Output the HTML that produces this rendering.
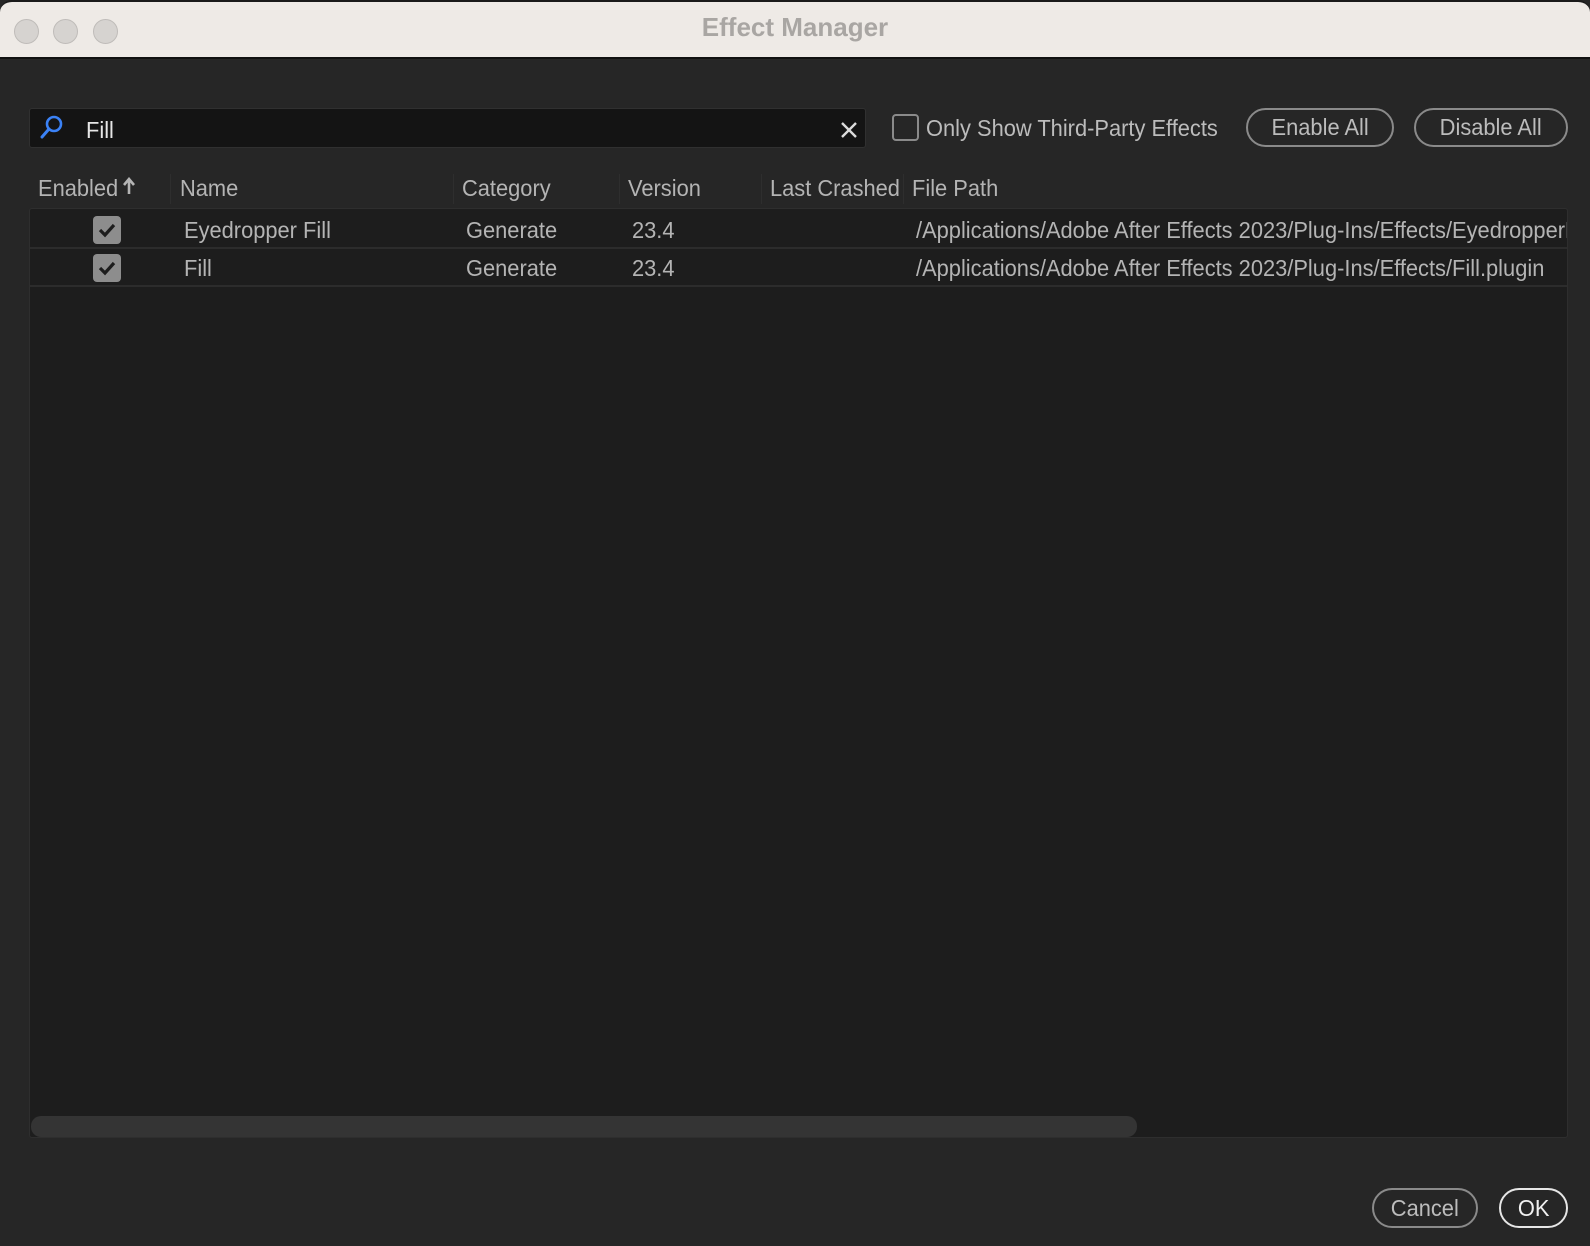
<!DOCTYPE html>
<html><head><meta charset="utf-8"><style>
*{margin:0;padding:0;box-sizing:border-box}
body{width:1590px;height:1246px;background:#262626;font-family:"Liberation Sans",sans-serif;position:relative;overflow:hidden;color:#b4b4b4}
.a{position:absolute}
.t{position:absolute;font-size:23px;white-space:nowrap;transform:scaleX(0.95);transform-origin:left center;line-height:26px}
.tb{left:0;top:0;width:1590px;height:59px;background:#eeeae6;border-top:2px solid #1a1a1a;border-bottom:2px solid #111;border-radius:12px 12px 0 0}
.dot{position:absolute;top:17px;width:25px;height:25px;border-radius:50%;background:#d6d3d0;border:1px solid #bfbcb9}
.btn{position:absolute;border:2px solid #8a8a8a;border-radius:20px;height:39px;color:#bcbcbc;font-size:23px;display:flex;align-items:center;justify-content:center}
.btn span{display:inline-block;transform:scaleX(0.95)}
.cb{position:absolute;left:93px;width:28px;height:28px;background:#8d8d8d;border-radius:4px}
.hs{position:absolute;top:174px;width:1px;height:30px;background:#2e2e2e}
</style></head><body>
<div class="a tb">
<div class="dot" style="left:14px"></div><div class="dot" style="left:53px"></div><div class="dot" style="left:93px"></div>
<div class="a" style="left:0;width:1590px;top:10px;text-align:center;font-size:26px;font-weight:bold;color:#a9a6a3">Effect Manager</div>
</div>
<div class="a" style="left:29px;top:108px;width:837px;height:40px;background:#141414;border:1px solid #303030;border-radius:3px"></div>
<svg class="a" style="left:38px;top:113px" width="28" height="28" viewBox="0 0 28 28"><circle cx="16" cy="11" r="7" fill="none" stroke="#3b82f6" stroke-width="2.6"/><path d="M11 16 L4 24" stroke="#3b82f6" stroke-width="3" stroke-linecap="round"/></svg>
<div class="t" style="left:86px;top:117px;color:#e6e6e6">Fill</div>
<svg class="a" style="left:839px;top:120px" width="20" height="20" viewBox="0 0 20 20"><path d="M3 3 L17 17 M17 3 L3 17" stroke="#dcdcdc" stroke-width="2.4"/></svg>
<div class="a" style="left:892px;top:114px;width:27px;height:27px;border:2px solid #8a8a8a;border-radius:4px"></div>
<div class="t" style="left:926px;top:115px;color:#bcbcbc">Only Show Third-Party Effects</div>
<div class="btn" style="left:1246px;top:108px;width:148px"><span>Enable All</span></div>
<div class="btn" style="left:1414px;top:108px;width:154px"><span>Disable All</span></div>
<div class="t" style="left:38px;top:175px">Enabled</div>
<svg class="a" style="left:122px;top:177px" width="14" height="18" viewBox="0 0 14 18"><path d="M7 17 V3 M2 8 L7 2 L12 8" stroke="#b4b4b4" stroke-width="2.6" fill="none"/></svg>
<div class="hs" style="left:170px"></div>
<div class="t" style="left:180px;top:175px">Name</div>
<div class="hs" style="left:453px"></div>
<div class="t" style="left:462px;top:175px">Category</div>
<div class="hs" style="left:619px"></div>
<div class="t" style="left:628px;top:175px">Version</div>
<div class="hs" style="left:761px"></div>
<div class="t" style="left:770px;top:175px">Last Crashed</div>
<div class="hs" style="left:903px"></div>
<div class="t" style="left:912px;top:175px">File Path</div>
<div class="a" style="left:29px;top:208px;width:1539px;height:930px;background:#1d1d1d;border:1px solid #2e2e2e;border-radius:3px;overflow:hidden">
<div class="a" style="left:0;top:38px;width:100%;height:2px;background:#2c2c2c"></div>
<div class="a" style="left:0;top:76px;width:100%;height:2px;background:#2c2c2c"></div>
<div class="a" style="left:1px;top:907px;width:1106px;height:21px;background:#343434;border-radius:10px"></div>
</div>
<div class="cb" style="top:216px"></div><div class="cb" style="top:254px"></div>
<svg class="a" style="left:93px;top:216px" width="28" height="28"><path d="M7 14 L12 19 L21 9" stroke="#1d1d1d" stroke-width="3.2" fill="none"/></svg>
<svg class="a" style="left:93px;top:254px" width="28" height="28"><path d="M7 14 L12 19 L21 9" stroke="#1d1d1d" stroke-width="3.2" fill="none"/></svg>
<div class="t" style="left:184px;top:217px">Eyedropper Fill</div>
<div class="t" style="left:466px;top:217px">Generate</div>
<div class="t" style="left:632px;top:217px">23.4</div>
<div class="a" style="left:916px;top:210px;width:651px;height:36px;overflow:hidden"><div class="t" style="left:0;top:7px">/Applications/Adobe After Effects 2023/Plug-Ins/Effects/EyedropperFill.plugin</div></div>
<div class="t" style="left:184px;top:255px">Fill</div>
<div class="t" style="left:466px;top:255px">Generate</div>
<div class="t" style="left:632px;top:255px">23.4</div>
<div class="t" style="left:916px;top:255px">/Applications/Adobe After Effects 2023/Plug-Ins/Effects/Fill.plugin</div>
<div class="btn" style="left:1372px;top:1188px;width:106px;height:40px"><span>Cancel</span></div>
<div class="btn" style="left:1499px;top:1188px;width:69px;height:40px;border-color:#e6e6e6;color:#f0f0f0"><span>OK</span></div>
</body></html>
